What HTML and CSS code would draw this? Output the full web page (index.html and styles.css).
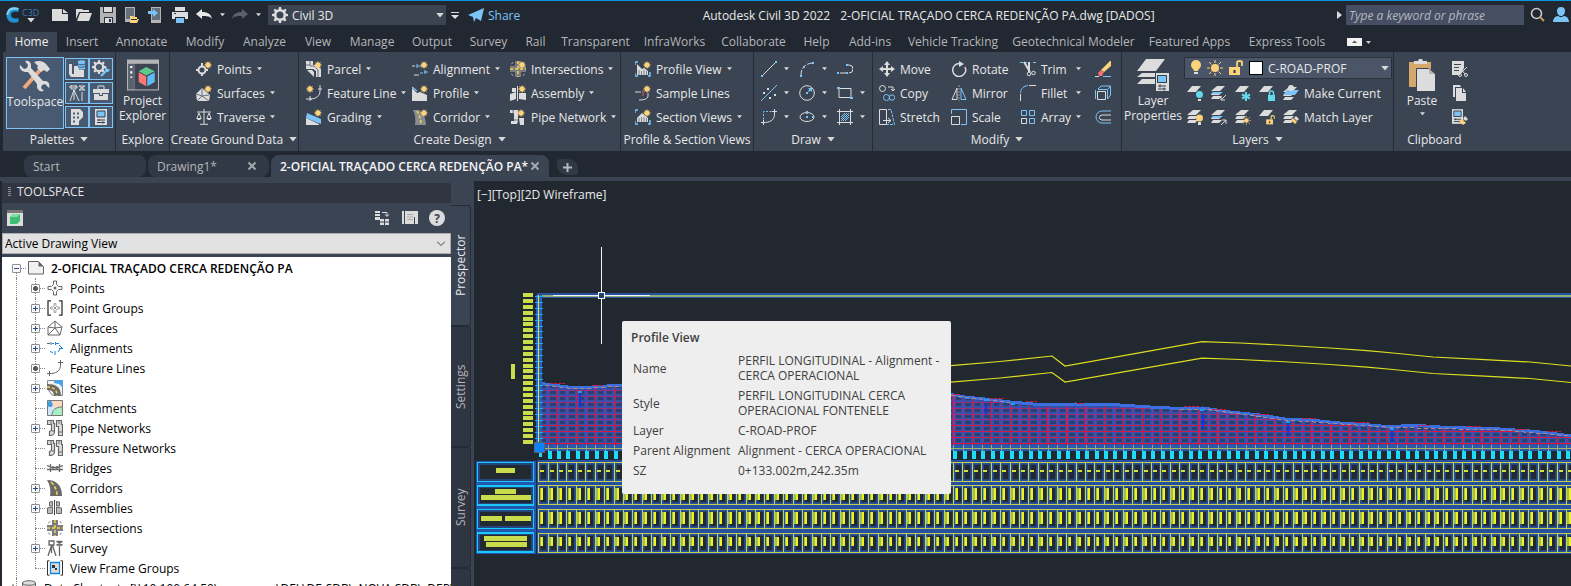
FILE: index.html
```html
<!DOCTYPE html>
<html lang="en">
<head>
<meta charset="utf-8">
<title>Autodesk Civil 3D 2022</title>
<link rel="stylesheet" href="styles.css">
</head>
<body>
<svg class="defs" aria-hidden="true">
  <symbol id="star" viewBox="0 0 8 8"><path class="y" d="M4 0l1 2 2-1-1 2 2 1-2 1 1 2-2-1-1 2-1-2-2 1 1-2-2-1 2-1-1-2 2 1z"/></symbol>
  <symbol id="caret" viewBox="0 0 6 4"><path fill="currentColor" d="M0 0h6L3 3.500z"/></symbol>
  <symbol id="close" viewBox="0 0 10 10"><path d="M1.500 1.500l7 7M8.500 1.500l-7 7" stroke="currentColor" stroke-width="2"/></symbol>
  <symbol id="new" viewBox="0 0 16 16"><path class="w" d="M0 2h10v5h6v7H0z"/><path class="w" d="M11 2l5 4h-5z"/></symbol>
  <symbol id="open" viewBox="0 0 16 16"><path class="w" d="M0 3V2h6l1 1h6v2H3L0 12z"/><path class="w" d="M4 6h12l-3 8H1z"/></symbol>
  <symbol id="save" viewBox="0 0 16 16"><path class="g" d="M0 0h16v16H0z"/><path class="d" d="M3 0h10v6H3zM4 10h9v6H4z"/><path class="w" d="M4 0h8v5H4zM5 11h7v5H5z"/><path class="d" d="M9 12h2v3H9z"/></symbol>
  <symbol id="webopen" viewBox="0 0 16 16"><path class="g" d="M1 0h10v15H1z"/><path fill="#66707c" d="M2 1h8v11H2z"/><path class="y" d="M6 9h3l1 1h3v2h2l-2 4H6z"/><path class="d" d="M7 12h6v1H7z"/></symbol>
  <symbol id="websave" viewBox="0 0 16 16"><path class="g" d="M3 0h10v16H3z"/><path fill="#66707c" d="M4 1h8v12H4z"/><path class="b" d="M0 4h5V2l5 4-5 4V7H0z"/></symbol>
  <symbol id="print" viewBox="0 0 16 16"><path class="w" d="M3 0h10v4H3zM0 5h16v7h-3v-2H3v2H0z"/><path class="b" d="M4 11h8v5H4z"/><path class="d" d="M2 6h2v1H2z"/></symbol>
  <symbol id="undo" viewBox="0 0 16 12"><path fill="currentColor" d="M0 5l6-5v3c6 0 9 2 10 7-2-3-5-3-10-3v3z"/></symbol>
  <symbol id="gear" viewBox="0 0 16 16"><path class="w" fill-rule="evenodd" d="M7 0h2l.5 2.300 1.700.7L13.300 1.800l1.200 1.300-1.200 2 .6 1.400 2.100.6v2l-2.200.5-.6 1.500 1.200 2-1.400 1.300-2-1.200-1.500.6L9 16H7l-.5-2.200-1.500-.6-2 1.200-1.400-1.300 1.200-2-.6-1.500L0 9V7l2.200-.5.6-1.400-1.200-2L2.900 1.800 5 3l1.500-.7zM8 4.500a3.500 3.500 0 100 7 3.500 3.500 0 000-7z"/></symbol>
  <symbol id="plane" viewBox="0 0 16 14"><path class="b" d="M0 7L16 0l-3 13-5-3-2 4-1-5zM5.500 8.500L12 3.500 7 9z"/></symbol>
  <symbol id="search" viewBox="0 0 16 16"><circle cx="6.500" cy="6.500" r="5" fill="none" stroke="#ccc" stroke-width="1.600"/><path d="M10 10l4 4" stroke="#c79a5c" stroke-width="2"/></symbol>
  <symbol id="user" viewBox="0 0 16 16"><path class="b" d="M8 0a4 4 0 014 4c0 3-2 5-4 5S4 7 4 4a4 4 0 014-4zM0 15c0-4 3-6 5-6 2 1.500 4 1.500 6 0 2 0 5 2 5 6z"/></symbol>

  <symbol id="tools" viewBox="0 0 32 32"><path d="M5 28L22 9" stroke="#f0a878" stroke-width="4"/><path class="w" d="M15 2c5-2 9-1 12 2l4 5-3 3-3-2-3 2-4-4 1-2z"/><path class="w" d="M1 5l4 4 3-1 1-3-3-4c3-1 6 1 6 4v3l12 13h3c3 1 4 4 3 7l-4-4-3 1-1 3 3 3c-4 1-7-1-7-5v-2L9 12H6c-4-1-6-4-5-7z"/></symbol>
  <symbol id="settings-pal" viewBox="0 0 18 18"><path class="w" d="M1 4h3v10h2V6h5v4h5v7H3l-2-3z"/><path class="b" d="M10 1c3-1 5-1 7 0v8c-2 1-5 1-7 0z"/><path d="M10 4c2 1 5 1 7 0M10 6.500c2 1 5 1 7 0" stroke="#35536f" fill="none"/></symbol>
  <symbol id="gearwrench" viewBox="0 0 18 18"><use href="#gear" width="14" height="14"/><path d="M9 16l6-6" stroke="#7cc4f8" stroke-width="2.400"/><path class="b" d="M13 8l2-1v2h2l1 1-2 2h-3z"/></symbol>
  <symbol id="tripod" viewBox="0 0 16 16"><path class="ws" d="M5 5L1 16M5 5v10M5 5l5 11M13 7v9M0 2h9M2 0h5v4H2zM10 1h6M10 5h6M10 1l6 4M16 1l-6 4"/></symbol>
  <symbol id="case" viewBox="0 0 16 16"><path class="ws" d="M5 4V1h6v3"/><path class="w" d="M0 4h16v4H0zM1 9h5v2h4V9h5v6H1z"/><path class="w" d="M7 8h2v2H7z"/></symbol>
  <symbol id="sheet" viewBox="0 0 16 16"><path class="w" d="M2 0h9l3 3v5l-4 4v4H2z"/><path stroke="#4a5f78" stroke-width="2" stroke-dasharray="2 2" d="M4 4.500h8M4 8.500h8M4 12.500h4"/></symbol>
  <symbol id="props" viewBox="0 0 12 16"><path class="w" d="M0 0h12v16H0z"/><path class="b" stroke="#333e4e" d="M2 2h8v6H2z"/><path d="M2 11h8M2 13.500h8M4 10v2M8 12.500v2" stroke="#333e4e"/></symbol>
  <symbol id="cube" viewBox="0 0 30 29"><path class="g" d="M0 0h30v29H0z"/><path fill="#3b4453" d="M7 4h22v24H7z"/><path fill="#5a626e" d="M1 4h6v24H1z"/><path stroke="#fff" stroke-width="2" stroke-dasharray="2 3" d="M4 6v11"/><path fill="#5dc98a" d="M18 7l8 4-8 4-7-4z"/><path fill="#f77" d="M11 12l7 4v9l-7-4z"/><path fill="#62baf5" d="M26 12l-7 4v9l7-4z"/></symbol>

  <symbol id="points" viewBox="0 0 16 16"><circle class="ws" cx="6" cy="9" r="3.500" stroke-width="2"/><path class="w" d="M5 2h2v4H5zM5 12h2v3H5zM0 8h3v2H0zM9 8h3v2H9z"/><use href="#star" x="8" width="8" height="8"/></symbol>
  <symbol id="surfaces" viewBox="0 0 16 16"><path class="w" d="M6 3l8 7-1 6H1L0 9z"/><path d="M0 9l6 2 7-1M6 3v8M1 16l5-5 7 5" stroke="#68707c" fill="none"/><use href="#star" x="8" width="8" height="8"/></symbol>
  <symbol id="traverse" viewBox="0 0 16 16"><path class="ws" d="M1 3h14M8 0v15M4 15.300h8M3 4L1 9M3 4l2 5M13 4l-2 5M13 4l2 5"/><path class="w" d="M0 9h6l-2 2H2zM10 9h6l-2 2h-2z"/></symbol>
  <symbol id="parcel" viewBox="0 0 16 16"><path class="w" d="M0 0h7v4h4l4 4v8h-5v-6L7 8H0z"/><path class="w" d="M1 9h5l2 2v5z"/><path d="M4 0v5h4l4 4v7M0 4h4" stroke="#68707c" fill="none"/><use href="#star" x="8" width="8" height="8"/></symbol>
  <symbol id="featureline" viewBox="0 0 16 16"><path class="ws" d="M12 4h4M14 0v6c0 5-4 8-10 8M0 14h6M4 11v5"/><use href="#star" width="8" height="8"/></symbol>
  <symbol id="grading" viewBox="0 0 16 16"><path class="w" d="M0 9l13 6v1H0z"/><path class="b" d="M1 4l14 6v5L0 9z"/><use href="#star" x="8" width="8" height="8"/></symbol>
  <symbol id="alignment" viewBox="0 0 16 16"><path class="ws" d="M0 5h3M2 14h5"/><path d="M5 5h5M5 3v4M12 11h4M13 9v4M8 12h3" stroke="#7cc4f8"/><use href="#star" x="8" width="8" height="8"/></symbol>
  <symbol id="profile" viewBox="0 0 16 16"><path class="w" d="M0 3l5 5 3-1 7 3v6H0z"/><path d="M0 2l5 4" stroke="#7cc4f8" stroke-width="1.500"/><use href="#star" x="8" width="8" height="8"/></symbol>
  <symbol id="corridor" viewBox="0 0 16 16"><path fill="#8a8d90" d="M1 1h6c4 3 7 8 7 15H3C4 10 3 5 1 1z"/><path d="M5 2c2 4 4 8 4 14" stroke="#fcd24b" stroke-width="1.500" stroke-dasharray="3 2" fill="none"/><use href="#star" x="8" width="8" height="8"/></symbol>
  <symbol id="cross" viewBox="0 0 16 16"><path fill="#7b7e80" d="M5 0h6v5h5v6h-5v5H5v-5H0V5h5z"/><path d="M8 0v16M0 8h16" stroke="#fcd24b" stroke-width="1.500" stroke-dasharray="3 2"/><path d="M1 3q2 0 2-2M15 3q-2 0-2-2M1 13q2 0 2 2M15 13q-2 0-2 2" stroke="#999" fill="none"/></symbol>
  <symbol id="intersections" viewBox="0 0 16 16"><use href="#cross" width="16" height="16"/><use href="#star" x="8" width="8" height="8"/></symbol>
  <symbol id="assembly" viewBox="0 0 16 16"><path class="w" d="M2 3h4v4H2zM0 9l6-2v7l-6 2zM9 8h7v7l-7-1z"/><path class="ws" d="M7.500 1v15"/><use href="#star" x="8" width="8" height="8"/></symbol>
  <symbol id="pipe" viewBox="0 0 16 16"><path class="w" d="M0 1h8v11l-1 3H1v-3h3V4H0zM9 9h5v7h-4z"/><path d="M3 1v4M4 11h4" stroke="#68707c"/><use href="#star" x="7" width="8" height="8"/></symbol>
  <symbol id="frame" viewBox="0 0 16 16"><path d="M0 4V1h3M0 12v3h3M13 15h2v-4" stroke="#7cc4f8" stroke-width="1.500" fill="none"/></symbol>
  <symbol id="profileview" viewBox="0 0 16 16"><use href="#frame" width="16" height="16"/><path class="w" d="M2 3l5 5 2-1 4 3v4H2z"/><path d="M4 9v5M6.500 10v4M9 9v5M11.500 10v4" stroke="#3b4453" stroke-width=".6"/><use href="#star" x="8" width="8" height="8"/></symbol>
  <symbol id="samplelines" viewBox="0 0 16 16"><path class="ws" d="M0 7h6M13 8v3c0 3-4 4-9 4"/><path d="M8 5v6" stroke="#e05a5a"/><use href="#star" x="8" width="8" height="8"/></symbol>
  <symbol id="sectionview" viewBox="0 0 16 16"><use href="#frame" width="16" height="16"/><path class="w" d="M2 13V9l5-5 6 5v4z"/><path d="M4 9v5M6.500 8v6M9 8v6M11.500 9v5" stroke="#3b4453" stroke-width=".6"/><use href="#star" x="8" width="8" height="8"/></symbol>

  <symbol id="line" viewBox="0 0 16 16"><path class="ws" d="M2 14L14 2"/><path class="b" d="M0 14h2v2H0zM14 0h2v2h-2z"/></symbol>
  <symbol id="arc" viewBox="0 0 16 16"><path class="ws" stroke-dasharray="5 1.500" d="M2 14C2 7 6 3 13 2"/><path class="b" d="M1 14h2v2H1zM4 5h2v2H4zM13 1h2v2h-2z"/></symbol>
  <symbol id="pline" viewBox="0 0 16 16"><path class="ws" d="M3 12h8M11 4h1a4 4 0 010 8"/><path class="b" d="M0 11h2v2H0zM9 3h2v2H9zM9 11h2v2H9z"/></symbol>
  <symbol id="cline" viewBox="0 0 16 16"><path d="M0 16L16 0" stroke="#7cc4f8"/><path class="w" d="M2 7h2v2H2zM6 3h2v2H6zM8 12h2v2H8zM13 9h2v2h-2z"/></symbol>
  <symbol id="circle" viewBox="0 0 16 16"><circle class="ws" cx="8" cy="8" r="7.300"/><path class="b" d="M7 7h2v2H7zM9 3h4v4l-1.500-1.500L10 7l-1-1 1.500-1.500z"/></symbol>
  <symbol id="rect" viewBox="0 0 16 16"><path class="ws" d="M2 3.500h12v9H2z"/><path class="b" d="M0 2h3v2H0zM13 12h3v2h-3z"/></symbol>
  <symbol id="fit" viewBox="0 0 16 16"><path d="M2.500 14V2.500H14" stroke="#7cc4f8" fill="none" stroke-dasharray="2 1.500"/><path class="ws" d="M11 2.500h5M13.500 0v5c0 5-3 8-9 8.500H0M2.500 11v5"/></symbol>
  <symbol id="ellipse" viewBox="0 0 16 16"><ellipse class="ws" cx="8" cy="8" rx="7" ry="4.500"/><path class="b" d="M7 7h2v2H7zM7 2h2v3H7zM13 7h2v2h-2z"/></symbol>
  <symbol id="hatch" viewBox="0 0 16 16"><path class="ws" d="M2.500 0v16M13.500 0v16M0 2.500h16M0 13.500h16"/><path d="M4 8l4-4M4 12l8-8M8 12l4-4M4 10l6-6M6 12l6-6" stroke="#7cc4f8"/></symbol>

  <symbol id="move" viewBox="0 0 16 16"><path class="w" d="M8 0l3 4H9v3h3V5l4 3-4 3V9H9v3h2l-3 4-3-4h2V9H4v2L0 8l4-3v2h3V4H5z"/></symbol>
  <symbol id="copy" viewBox="0 0 16 16"><circle class="ws" cx="3.500" cy="3.500" r="3"/><path class="ws" d="M9 2h5v3M12 4l2 2 2-2"/><circle class="bs" cx="7.500" cy="12.500" r="3"/><circle class="bs" cx="13" cy="12.500" r="2.700"/></symbol>
  <symbol id="stretch" viewBox="0 0 16 16"><path class="ws" d="M.5.500h7v15h-7zM4 11.500h8M9 9l3 2.500L9 14"/><path class="bs" d="M9 .5h3l3.500 15H8" stroke-dasharray="3 1"/></symbol>
  <symbol id="rotate" viewBox="0 0 16 16"><path class="ws" stroke-width="1.500" d="M9 2.500A6.500 6.500 0 1014 6"/><path class="w" d="M8 0l5 3-5 3z"/></symbol>
  <symbol id="mirror" viewBox="0 0 16 16"><path class="ws" d="M6 3v11.500H1z"/><path class="bs" d="M10 3v11.500h5z"/><path stroke="#999" d="M8 0v16" stroke-dasharray="2 1"/></symbol>
  <symbol id="scale" viewBox="0 0 16 16"><path class="bs" d="M.5 5V.5h15v15H10"/><path class="ws" d="M.5 7.500h8v8h-8z"/></symbol>
  <symbol id="trim" viewBox="0 0 16 16"><path d="M0 1.500h9M13 1.500h3" stroke="#7cc4f8" stroke-dasharray="3 1"/><path class="ws" stroke-width="2" d="M4 1l6 10M9 1v10"/><circle class="ws" cx="9" cy="13" r="1.800"/><circle class="ws" cx="13.500" cy="12" r="1.800"/></symbol>
  <symbol id="fillet" viewBox="0 0 16 16"><path class="bs" d="M.5 8C1 3 4 1 8 .5"/><path class="ws" d="M.5 9v7M9 .5h7"/></symbol>
  <symbol id="array" viewBox="0 0 16 16"><path class="bs" d="M1.500 1.500h5v5h-5zM9.500 1.500h5v5h-5zM9.500 9.500h5v5h-5z"/><path class="ws" d="M1.500 9.500h5v5h-5z"/></symbol>
  <symbol id="erase" viewBox="0 0 16 16"><path class="y" d="M6 9l9-9h1v5l-7 6z"/><path fill="#f27070" d="M3 12l3-3 3 2-2 4H4z"/><path class="ws" d="M0 15.500h4"/><path class="bs" d="M8 15.500h8"/></symbol>
  <symbol id="explode" viewBox="0 0 16 16"><path class="ws" d="M2.500 6.500h8v8h-8z"/><path class="bs" d="M.5 14V5M3 4l3-3h9.500v9l-3 4M12.500 14V4.500L15.500 1M3 4.500h9"/></symbol>
  <symbol id="offset" viewBox="0 0 16 16"><path class="bs" d="M16 2H7a6 6 0 000 12h9"/><path class="ws" d="M16 6H7a2.500 2.500 0 000 5h9"/></symbol>

  <symbol id="stack" viewBox="0 0 28 25"><path class="w" d="M9 0h19L19 12H0zM5 14h17l-2 4H0zM5 20h15l-2 5H0z"/></symbol>
  <symbol id="layerprops" viewBox="0 0 32 32"><use href="#stack" width="28" height="25"/><path class="w" stroke="#3b4453" d="M18.500 13.500h14v19h-14z"/><path class="b" stroke="#333e4e" d="M20.500 16.500h9v7h-9z"/><path d="M21 27h8M21 30h8M23 25.500v3M27 28.500v3" stroke="#333e4e"/></symbol>
  <symbol id="bulb" viewBox="0 0 12 16"><path class="y" d="M6 0a5 5 0 015 5c0 3-3 4-3 6H4c0-2-3-3-3-6a5 5 0 015-5z"/><path class="w" d="M4 12h4v2H4z"/></symbol>
  <symbol id="sun" viewBox="0 0 16 16"><circle class="y" cx="8" cy="8" r="4"/><path d="M8 0v3M8 13v3M0 8h3M13 8h3M2 2l2.500 2.500M11.500 11.500L14 14M14 2l-2.500 2.500M4.500 11.500L2 14" stroke="#fcd27b"/></symbol>
  <symbol id="unlock" viewBox="0 0 14 16"><path class="y" d="M0 7h11v8H0z"/><path d="M8 7V2.500C8 .5 13 .5 13 2.500V6" stroke="#fcd27b" stroke-width="1.800" fill="none"/><path class="d" d="M4.500 10h2v3h-2z"/></symbol>
  <symbol id="lay1" viewBox="0 0 16 16"><path class="w" d="M5 1h9l-5 6H0z"/></symbol>
  <symbol id="lay3" viewBox="0 0 16 16"><path class="w" d="M6 1h8l-5 5H0z"/><path class="w" d="M2 7h9l-3 3H0zM2 11h9l-3 3H0z"/></symbol>
  <symbol id="layoff" viewBox="0 0 16 16"><use href="#lay1"/><circle cx="12.500" cy="9.500" r="3.500" fill="#62d8e8"/><path class="w" d="M11 14h3v2h-3z"/></symbol>
  <symbol id="layiso" viewBox="0 0 16 16"><use href="#lay3"/><path class="b" d="M2 7h10l-3 2H0z"/><path class="ws" d="M15 10l-5 5M10 11v4h4"/></symbol>
  <symbol id="layfrz" viewBox="0 0 16 16"><use href="#lay1"/><path d="M11 7v9M7 9.500l8 4M15 9.500l-8 4" stroke="#62d8e8" stroke-width="2"/></symbol>
  <symbol id="laylck" viewBox="0 0 16 16"><use href="#lay1"/><path fill="#62d8e8" d="M9 10h7v6H9z"/><path d="M10.500 10V8a2 2 0 014 0v2" stroke="#62d8e8" stroke-width="1.500" fill="none"/></symbol>
  <symbol id="mkcur" viewBox="0 0 16 16"><use href="#lay3" y="1"/><path class="b" d="M4 5h12l-4 5H0z"/><circle class="w" cx="8" cy="3" r="3"/></symbol>
  <symbol id="layon" viewBox="0 0 16 16"><use href="#lay3"/><circle class="y" cx="12.500" cy="9" r="3.500"/><path class="w" d="M11 13h3v3h-3z"/></symbol>
  <symbol id="layuniso" viewBox="0 0 16 16"><use href="#lay3"/><path class="b" d="M2 7h10l-3 2H0z"/><path class="ws" d="M10 16l5-5M11 11h4v4"/></symbol>
  <symbol id="laythw" viewBox="0 0 16 16"><use href="#lay3"/><use href="#sun" x="7" y="7" width="9" height="9"/></symbol>
  <symbol id="layulk" viewBox="0 0 16 16"><use href="#lay1"/><use href="#unlock" x="7" y="6" width="9" height="10"/></symbol>
  <symbol id="laymch" viewBox="0 0 16 16"><use href="#lay3"/><path class="y" d="M8 11l4 4 2-2-4-4z"/><path class="w" d="M11 9l2-2 3 3-2 2z"/></symbol>
  <symbol id="paste" viewBox="0 0 26 32"><path fill="#d5a86c" d="M0 3h22v25H0z"/><path class="w" d="M5 5V2h4l1-2h3l1 2h4v3z"/><path class="w" stroke="#3b4453" d="M7.500 9.500h12l7 6v17h-19z"/><path class="g" d="M20 10v5h6z"/></symbol>
  <symbol id="cut" viewBox="0 0 16 16"><path class="w" d="M0 0h12v7l-4 7H0z"/><path d="M2 3.500h7M2 6.500h6M2 9.500h5" stroke="#3b4453"/><path class="ws" d="M7 6l6 7M15 6l-7 7"/><circle class="ws" cx="8" cy="14" r="1.500"/><circle class="ws" cx="14" cy="14" r="1.500"/></symbol>
  <symbol id="copyclip" viewBox="0 0 16 16"><path class="w" d="M1 0h7l1 2H3v10H1z"/><path class="w" d="M4 3h6v5h4v8H4zM11 3l3 4h-3z"/></symbol>
  <symbol id="matchprop" viewBox="0 0 16 16"><use href="#props" width="11" height="15"/><path class="y" d="M7 12l4 4 3-2-4-4z"/><path class="w" d="M11 10l2-3 3 3-2 2z"/></symbol>

  <symbol id="tdoc" viewBox="0 0 16 14"><path d="M.5.500h10l5 5v7.500H.5z" fill="#f2f2f2" stroke="#666"/><path d="M10.500.5v5h5z" fill="#666"/></symbol>
  <symbol id="tpoint" viewBox="0 0 16 16"><path class="ts" d="M6.500 1h3v3.500l2 2H15v3h-3.500l-2 2V15h-3v-3.500l-2-2H1v-3h3.500l2-2z"/><circle cx="8" cy="8" r="1.500" fill="#666"/></symbol>
  <symbol id="tpgroup" viewBox="0 0 16 16"><use href="#tpoint" x="3" y="3" width="10" height="10"/><path d="M4 .8H1v14.400h3M12 .8h3v14.400h-3" stroke="#333" stroke-width="1.300" fill="none"/></symbol>
  <symbol id="tsurf" viewBox="0 0 16 16"><path class="ts" d="M8 1l7 6-2 8H1V7zM8 1v7M1 7l7 1 7-1M1 15l7-7 5 7"/></symbol>
  <symbol id="talign" viewBox="0 0 16 16"><path d="M0 3.500h3M5 3.500h2" stroke="#666"/><path d="M4 2v3M8 3.500h4M8.500 2v3M12 5l3 3M12 8.500h4M13 9l-2 3M3 11.500l3 1M8 11v4" stroke="#1c84d6"/></symbol>
  <symbol id="tfeat" viewBox="0 0 16 16"><path class="ts" d="M11 2.500h5M13.500 0v5c0 5-3 8-9 8.500H0M2.500 11v5"/></symbol>
  <symbol id="tsite" viewBox="0 0 16 16"><path d="M.5.500h15v15h-5L5 15 .5 9z" fill="#f2f2f2" stroke="#888"/><path fill="#4aa5e8" d="M7 0h9v8l-4-4-5-1z"/><path fill="#6a6a6a" d="M0 4c9 0 14 3 14 12H7c0-4-2-6-7-6z"/><path d="M0 7c7 0 10 3 10 9" stroke="#fcd24b" stroke-width="1.500" stroke-dasharray="3 2" fill="none"/></symbol>
  <symbol id="tcatch" viewBox="0 0 16 16"><path d="M.5.500h15v15H.5z" fill="#fbd9bd" stroke="#777"/><path fill="#d3e7fb" d="M1 6h5l2 2-3 7H1z"/><path fill="#a9f0c4" d="M5 15c0-5 4-8 10-8v8z"/><path d="M5 15c0-5 4-8 10-8" stroke="#777" fill="none"/><path fill="#3f9be0" d="M3 0c4 4 3 7 0 7S-1 4 3 0z"/></symbol>
  <symbol id="tpipe" viewBox="0 0 16 16"><path d="M.5.500h6v3h1v8c0 3-1 4-5 4v-4l2-1v-6h-4zM9.500.500h5v4h1v11h-4v-9h-2z" fill="#ddd" stroke="#666" stroke-width="1.200"/><path d="M4 0v4M5 11h3M12 0v4M11 12h4" stroke="#666"/></symbol>
  <symbol id="tbridge" viewBox="0 0 16 16"><path class="ts" stroke-width="1.300" d="M0 5.500q8 4 16 0M0 9.500h16M3.500 4v8M12.500 4v8M6 6v4M10 6v4"/></symbol>
  <symbol id="tcorr" viewBox="0 0 16 16"><path fill="#6a6a6a" d="M0 0c10 0 15 6 15 16H3C4 10 3 5 0 0z"/><path d="M4 2c4 4 6 8 6 14" stroke="#fcd24b" stroke-width="1.600" stroke-dasharray="3.500 2" fill="none"/></symbol>
  <symbol id="tassm" viewBox="0 0 16 16"><path d="M2.500 6V2l3-.5V6zM.5 8l5-1v6.500H.5zM9.500 7l5 1v5.500h-5zM9.500 1.500l3 .5v4h-3z" fill="#bbb" stroke="#666"/><path stroke="#444" d="M7.500 0v15"/></symbol>
  <symbol id="tsurvey" viewBox="0 0 16 16"><path class="ts" stroke-width="1.300" d="M4.500 5.500L1 16M4.500 5.500V13M5.500 5.500L9 16M12.500 6v10M2 1h5v4H2zM9.500 1.500h6M9.500 5h6M9.500 1.500l6 3.500M15.500 1.500l-6 3.500"/></symbol>
  <symbol id="tvfg" viewBox="0 0 16 16"><path d="M2.500.8h-2v14.400h2M13.500.8h2v14.400h-2" stroke="#333" fill="none"/><path d="M3.500 2.500h9v11h-9z" fill="#ddd" stroke="#1c84d6" stroke-width="1.300"/><path fill="#333" d="M5 5h3v3H5zM8 8h2v2H8z"/></symbol>
  <symbol id="tdb" viewBox="0 0 14 16"><path d="M.5 3c0-3 13-3 13 0v12H.5z" fill="#ddd" stroke="#666"/><path d="M.5 3c0 3 13 3 13 0" fill="none" stroke="#666"/></symbol>
</svg>

<header class="titlebar">
  <button class="app" aria-label="Application menu"><svg class="logo" viewBox="0 0 13 16"><path d="M12.500 1C5-1.500 .5 2.500 .5 8s4.500 9.500 12 7v-4c-4 1.500-7.500 0-7.500-3s3.500-4.500 7.500-3z" fill="#1f8fd0"/><path d="M12.500 1C5-1.500 .5 2.500 .5 8h2C3 3.500 6 2 12.500 3z" fill="#7fd0f2"/></svg><span class="c3d">C3D<svg class="caret-lg"><use href="#caret"/></svg></span></button>
  <nav class="quick">
    <button aria-label="New"><svg class="i"><use href="#new"/></svg></button>
    <button aria-label="Open"><svg class="i"><use href="#open"/></svg></button>
    <button aria-label="Save"><svg class="i"><use href="#save"/></svg></button>
    <button aria-label="Open from web"><svg class="i"><use href="#webopen"/></svg></button>
    <button aria-label="Save to web"><svg class="i"><use href="#websave"/></svg></button>
    <button aria-label="Plot"><svg class="i"><use href="#print"/></svg></button>
    <button aria-label="Undo"><svg class="i"><use href="#undo"/></svg></button>
  </nav>
  <button class="drop" aria-label="Undo list"><svg class="car"><use href="#caret"/></svg></button>
  <button class="dim" aria-label="Redo"><svg class="i"><use href="#undo" transform="matrix(-1 0 0 1 16 0)"/></svg></button>
  <button class="drop" aria-label="Redo list"><svg class="car"><use href="#caret"/></svg></button>
  <label class="workspace"><svg class="i"><use href="#gear"/></svg><select aria-label="Workspace"><option>Civil 3D</option></select><svg class="caret-lg"><use href="#caret"/></svg></label>
  <button class="custom" aria-label="Customize"><svg viewBox="0 0 8 7"><path fill="#ddd" d="M0 0h8v1H0zM0 3h8L4 7z"/></svg></button>
  <button class="share"><svg class="i"><use href="#plane"/></svg>Share</button>
  <h1 class="doc"><span>Autodesk Civil 3D 2022</span><span>2-OFICIAL TRAÇADO CERCA REDENÇÃO PA.dwg [DADOS]</span></h1>
  <button class="expand" aria-label="Show search"><svg viewBox="0 0 5 8"><path fill="#ddd" d="M0 0l5 4-5 4z"/></svg></button>
  <input class="search" type="text" placeholder="Type a keyword or phrase" aria-label="Search">
  <button class="find" aria-label="Find"><svg class="i"><use href="#search"/></svg></button>
  <button class="account" aria-label="Account"><svg class="i"><use href="#user"/></svg></button>
</header>

<nav class="menu">
  <button class="on">Home</button><button>Insert</button><button>Annotate</button><button>Modify</button><button>Analyze</button><button>View</button><button>Manage</button><button>Output</button><button>Survey</button><button>Rail</button><button>Transparent</button><button>InfraWorks</button><button>Collaborate</button><button>Help</button><button>Add-ins</button><button>Vehicle Tracking</button><button>Geotechnical Modeler</button><button>Featured Apps</button><button>Express Tools</button>
  <button class="mini" aria-label="Minimize ribbon"><svg viewBox="0 0 24 8"><path fill="#f2f2f2" d="M0 0h15v8H0z"/><path fill="#555" d="M5 5h5L7.500 2.500z"/><path fill="#ccc" d="M19 3h5l-2.500 3z"/></svg></button>
</nav>

<main class="ribbon">
  <section class="panel palettes">
    <div class="body">
      <button class="big sel"><svg class="i32"><use href="#tools"/></svg>Toolspace</button>
      <div class="six">
        <button aria-label="Survey database"><svg class="i18"><use href="#settings-pal"/></svg></button>
        <button aria-label="Settings"><svg class="i18"><use href="#gearwrench"/></svg></button>
        <button aria-label="Survey"><svg class="i"><use href="#tripod"/></svg></button>
        <button aria-label="Toolbox"><svg class="i"><use href="#case"/></svg></button>
        <button aria-label="Panorama"><svg class="i"><use href="#sheet"/></svg></button>
        <button aria-label="Properties"><svg class="i"><use href="#props"/></svg></button>
      </div>
    </div>
    <h2>Palettes<svg class="caret-lg"><use href="#caret"/></svg></h2>
  </section>
  <section class="panel explore">
    <div class="body"><button class="big"><svg class="i32"><use href="#cube"/></svg>Project<br>Explorer</button></div>
    <h2>Explore</h2>
  </section>
  <section class="panel ground">
    <div class="body rows">
      <button><svg class="i"><use href="#points"/></svg>Points<svg class="car"><use href="#caret"/></svg></button>
      <button><svg class="i"><use href="#surfaces"/></svg>Surfaces<svg class="car"><use href="#caret"/></svg></button>
      <button><svg class="i"><use href="#traverse"/></svg>Traverse<svg class="car"><use href="#caret"/></svg></button>
    </div>
    <h2>Create Ground Data<svg class="caret-lg"><use href="#caret"/></svg></h2>
  </section>
  <section class="panel design">
    <div class="body rows">
      <button><svg class="i"><use href="#parcel"/></svg>Parcel<svg class="car"><use href="#caret"/></svg></button>
      <button><svg class="i"><use href="#alignment"/></svg>Alignment<svg class="car"><use href="#caret"/></svg></button>
      <button><svg class="i"><use href="#intersections"/></svg>Intersections<svg class="car"><use href="#caret"/></svg></button>
      <button><svg class="i"><use href="#featureline"/></svg>Feature Line<svg class="car"><use href="#caret"/></svg></button>
      <button><svg class="i"><use href="#profile"/></svg>Profile<svg class="car"><use href="#caret"/></svg></button>
      <button><svg class="i"><use href="#assembly"/></svg>Assembly<svg class="car"><use href="#caret"/></svg></button>
      <button><svg class="i"><use href="#grading"/></svg>Grading<svg class="car"><use href="#caret"/></svg></button>
      <button><svg class="i"><use href="#corridor"/></svg>Corridor<svg class="car"><use href="#caret"/></svg></button>
      <button><svg class="i"><use href="#pipe"/></svg>Pipe Network<svg class="car"><use href="#caret"/></svg></button>
    </div>
    <h2>Create Design<svg class="caret-lg"><use href="#caret"/></svg></h2>
  </section>
  <section class="panel views">
    <div class="body rows">
      <button><svg class="i"><use href="#profileview"/></svg>Profile View<svg class="car"><use href="#caret"/></svg></button>
      <button><svg class="i"><use href="#samplelines"/></svg>Sample Lines</button>
      <button><svg class="i"><use href="#sectionview"/></svg>Section Views<svg class="car"><use href="#caret"/></svg></button>
    </div>
    <h2>Profile &amp; Section Views</h2>
  </section>
  <section class="panel draw">
    <div class="body rows">
      <button aria-label="Line"><svg class="i"><use href="#line"/></svg><svg class="car"><use href="#caret"/></svg></button>
      <button aria-label="Arc"><svg class="i"><use href="#arc"/></svg><svg class="car"><use href="#caret"/></svg></button>
      <button aria-label="Polyline"><svg class="i"><use href="#pline"/></svg></button>
      <button aria-label="Construction line"><svg class="i"><use href="#cline"/></svg><svg class="car"><use href="#caret"/></svg></button>
      <button aria-label="Circle"><svg class="i"><use href="#circle"/></svg><svg class="car"><use href="#caret"/></svg></button>
      <button aria-label="Rectangle"><svg class="i"><use href="#rect"/></svg><svg class="car"><use href="#caret"/></svg></button>
      <button aria-label="Best fit"><svg class="i"><use href="#fit"/></svg><svg class="car"><use href="#caret"/></svg></button>
      <button aria-label="Ellipse"><svg class="i"><use href="#ellipse"/></svg><svg class="car"><use href="#caret"/></svg></button>
      <button aria-label="Hatch"><svg class="i"><use href="#hatch"/></svg><svg class="car"><use href="#caret"/></svg></button>
    </div>
    <h2>Draw<svg class="caret-lg"><use href="#caret"/></svg></h2>
  </section>
  <section class="panel modify">
    <div class="body rows">
      <button><svg class="i"><use href="#move"/></svg>Move</button>
      <button><svg class="i"><use href="#rotate"/></svg>Rotate</button>
      <button class="spread"><svg class="i"><use href="#trim"/></svg>Trim<svg class="car"><use href="#caret"/></svg></button>
      <button aria-label="Erase"><svg class="i"><use href="#erase"/></svg></button>
      <button><svg class="i"><use href="#copy"/></svg>Copy</button>
      <button><svg class="i"><use href="#mirror"/></svg>Mirror</button>
      <button class="spread"><svg class="i"><use href="#fillet"/></svg>Fillet<svg class="car"><use href="#caret"/></svg></button>
      <button aria-label="Explode"><svg class="i"><use href="#explode"/></svg></button>
      <button><svg class="i"><use href="#stretch"/></svg>Stretch</button>
      <button><svg class="i"><use href="#scale"/></svg>Scale</button>
      <button class="spread"><svg class="i"><use href="#array"/></svg>Array<svg class="car"><use href="#caret"/></svg></button>
      <button aria-label="Offset"><svg class="i"><use href="#offset"/></svg></button>
    </div>
    <h2>Modify<svg class="caret-lg"><use href="#caret"/></svg></h2>
  </section>
  <section class="panel layers">
    <div class="body">
      <button class="big"><svg class="i32"><use href="#layerprops"/></svg>Layer<br>Properties</button>
      <div class="layer-tools">
        <label class="layer-box"><svg class="bulb"><use href="#bulb"/></svg><svg class="i"><use href="#sun"/></svg><svg class="i"><use href="#unlock"/></svg><span class="swatch"></span><select aria-label="Current layer"><option>C-ROAD-PROF</option></select><svg class="caret-lg"><use href="#caret"/></svg></label>
        <div class="layer-grid rows">
          <button aria-label="Off"><svg class="i"><use href="#layoff"/></svg></button>
          <button aria-label="Isolate"><svg class="i"><use href="#layiso"/></svg></button>
          <button aria-label="Freeze"><svg class="i"><use href="#layfrz"/></svg></button>
          <button aria-label="Lock"><svg class="i"><use href="#laylck"/></svg></button>
          <button><svg class="i"><use href="#mkcur"/></svg>Make Current</button>
          <button aria-label="Turn all layers on"><svg class="i"><use href="#layon"/></svg></button>
          <button aria-label="Unisolate"><svg class="i"><use href="#layuniso"/></svg></button>
          <button aria-label="Thaw"><svg class="i"><use href="#laythw"/></svg></button>
          <button aria-label="Unlock"><svg class="i"><use href="#layulk"/></svg></button>
          <button><svg class="i"><use href="#laymch"/></svg>Match Layer</button>
        </div>
      </div>
    </div>
    <h2>Layers<svg class="caret-lg"><use href="#caret"/></svg></h2>
  </section>
  <section class="panel clip">
    <div class="body">
      <button class="big"><svg class="i32"><use href="#paste"/></svg>Paste<svg class="car"><use href="#caret"/></svg></button>
      <div class="rows">
        <button aria-label="Cut"><svg class="i"><use href="#cut"/></svg></button>
        <button aria-label="Copy clip"><svg class="i"><use href="#copyclip"/></svg></button>
        <button aria-label="Match properties"><svg class="i"><use href="#matchprop"/></svg></button>
      </div>
    </div>
    <h2>Clipboard</h2>
  </section>
</main>

<nav class="files">
  <div class="file start"><button class="name">Start</button></div>
  <div class="file second"><button class="name">Drawing1*</button><button class="x" aria-label="Close Drawing1"><svg><use href="#close"/></svg></button></div>
  <div class="file active"><button class="name">2-OFICIAL TRAÇADO CERCA REDENÇÃO PA*</button><button class="x" aria-label="Close drawing"><svg><use href="#close"/></svg></button></div>
  <button class="plus" aria-label="New tab"><svg viewBox="0 0 9 9"><path d="M4.500 0v9M0 4.500h9" stroke="#b5b8bc" stroke-width="2"/></svg></button>
</nav>

<div class="work">
  <aside class="toolspace">
    <h2 class="ts-title"><span class="grip"></span>TOOLSPACE</h2>
    <div class="ts-bar">
      <button aria-label="Item view"><svg class="i" viewBox="0 0 16 16"><path class="w" d="M0 0h16v16H0z"/><path fill="#777" d="M0 0h16v3H0z"/><path fill="#3fbf74" d="M3 7l3-3h7v7l-3 3H3z"/><path fill="#7fe0a4" d="M3 7l3-3h7l-3 3z"/></svg></button>
      <span class="grow"></span>
      <button aria-label="Toggle preview"><svg class="i" viewBox="0 0 16 16"><path class="w" d="M0 1h5v9H0zM5 9h4v6H5zM10 9h4v6h-4z"/><path stroke="#3b4453" d="M0 3.500h5M0 6.500h5M5 12h9"/><path class="ws" d="M7 2.500h5V6M10 4.500l2 2 2-2"/></svg></button>
      <button aria-label="Panorama display"><svg class="i" viewBox="0 0 16 16"><path class="w" d="M0 1h2v13H0zM3 1h13v13H3z"/><path stroke="#aaa" d="M5 4.500h6M5 7h6M5 9.500h6"/><path fill="#3b4453" d="M12 7h1v7h-1z"/></svg></button>
      <button class="help" aria-label="Help">?</button>
    </div>
    <label class="view"><select aria-label="View"><option>Active Drawing View</option></select><svg viewBox="0 0 8 5"><path d="M0 .5l4 4 4-4" fill="none" stroke="#444"/></svg></label>
    <ul class="tree">
      <li class="root"><i class="ex minus"></i><svg class="i"><use href="#tdoc"/></svg><b>2-OFICIAL TRAÇADO CERCA REDENÇÃO PA</b></li>
      <li><i class="ex dot"></i><svg class="i"><use href="#tpoint"/></svg>Points</li>
      <li><i class="ex more"></i><svg class="i"><use href="#tpgroup"/></svg>Point Groups</li>
      <li><i class="ex more"></i><svg class="i"><use href="#tsurf"/></svg>Surfaces</li>
      <li><i class="ex more"></i><svg class="i"><use href="#talign"/></svg>Alignments</li>
      <li><i class="ex dot"></i><svg class="i"><use href="#tfeat"/></svg>Feature Lines</li>
      <li><i class="ex more"></i><svg class="i"><use href="#tsite"/></svg>Sites</li>
      <li><i class="ex"></i><svg class="i"><use href="#tcatch"/></svg>Catchments</li>
      <li><i class="ex more"></i><svg class="i"><use href="#tpipe"/></svg>Pipe Networks</li>
      <li><i class="ex"></i><svg class="i"><use href="#tpipe"/></svg>Pressure Networks</li>
      <li><i class="ex"></i><svg class="i"><use href="#tbridge"/></svg>Bridges</li>
      <li><i class="ex more"></i><svg class="i"><use href="#tcorr"/></svg>Corridors</li>
      <li><i class="ex more"></i><svg class="i"><use href="#tassm"/></svg>Assemblies</li>
      <li><i class="ex"></i><svg class="i"><use href="#cross"/></svg>Intersections</li>
      <li><i class="ex more"></i><svg class="i"><use href="#tsurvey"/></svg>Survey</li>
      <li class="last"><i class="ex"></i><svg class="i"><use href="#tvfg"/></svg>View Frame Groups</li>
      <li class="root"><i class="ex minus"></i><svg class="i"><use href="#tdb"/></svg>Data Shortcuts [\\10.100.64.50\geonorma\DEL\DE-SDB\_NOVA SDB\_DEP\_01</li>
    </ul>
  </aside>
  <nav class="side">
    <button class="on">Prospector</button><button>Settings</button><button>Survey</button><button aria-label="Toolbox"></button>
  </nav>
  <section class="canvas">
    <svg class="drawing" aria-label="Profile view drawing">
      <defs>
        <clipPath id="ground"><path d="M538 383L552 385 575 388 600 386.500 622 385 760 384 951 394.500 965 397 985 399 1010 402 1045 405 1075 404 1120 405 1150 407 1180 408.500 1203 408 1230 412 1260 415 1285 419 1310 420 1340 423 1370 425 1392 427 1411 425 1440 427 1470 428 1500 429 1530 431 1550 433 1571 436 1900 446V446H538z"/></clipPath>
      </defs>
      <g transform="translate(-474 -181)">
        <path d="M527.500 293v151" stroke="#c9dc4c" stroke-width="10" stroke-dasharray="4 1.880"/>
        <path fill="#c9dc4c" d="M511 364h4v15h-4z"/>
        <path fill="#2452a0" d="M537 293h2400v5H537z"/><path fill="#8fae74" d="M539 295h2400v2H539z"/>
        <g clip-path="url(#ground)">
          <path fill="#29416f" d="M538 380h1400v66H538z"/>
          <path stroke="#3152ac" stroke-width="1400" stroke-dasharray="3 2.900" d="M1238 444.500V370"/>
          <path stroke="#3152ac" stroke-width="70" stroke-dasharray="4 5.430" d="M537 410H1900"/>
          <path stroke="#a02c78" stroke-width="1400" stroke-dasharray="1 4.900" d="M1238 444V370"/>
          <path stroke="#863898" stroke-width="70" stroke-dasharray="1 8.430" d="M538.600 410H1900"/>
          <path stroke="#e41434" stroke-width="70" stroke-dasharray="1 17.860" d="M557 410H1900"/>
          <path stroke="#d01c40" stroke-width="1400" stroke-dasharray="1 4.900" d="M1238 444V424"/>
        </g>
        <path fill="none" stroke="#3b6fe0" stroke-width="3" d="M538 383L552 385 575 388 600 386.500 622 385 760 384 951 394.500 965 397 985 399 1010 402 1045 405 1075 404 1120 405 1150 407 1180 408.500 1203 408 1230 412 1260 415 1285 419 1310 420 1340 423 1370 425 1392 427 1411 425 1440 427 1470 428 1500 429 1530 431 1550 433 1571 436"/>
        <path fill="none" stroke="#b08880" stroke-dasharray="4 3" d="M538 384L575 389 622 386M951 395.500L1010 402.500M1180 409L1203 409 1285 420 1392 427.500 1500 430 1571 436"/>
        <path stroke="#d01838" stroke-dasharray="3 1" d="M550 383.500h15M592 385.500h12M953 394.500h8M990 398.500h14M1026 401.500h12M1077 403.500h8M1184 406.500h16M1212 409.500h14M1255 414.500h14M1302 418.500h14M1354 422.500h16M1418 425.500h12M1466 426.500h16M1515 429.500h13M1547 431.500h14"/>
        <path fill="#1a9dff" d="M578 391h4v2h-4zM984 399h4v2h-4zM1011 403h4v2h-4zM1200 409h4v2h-4zM1286 421h4v2h-4zM1390 428h4v2h-4z"/>
        <path fill="#1632e0" d="M579 394h2v13h-2zM985 404h2v10h-2zM1202 414h2v14h-2zM1287 424h2v12h-2zM1391 431h2v11h-2z"/>
        <path fill="#e01430" d="M541 443h2400v1H541z"/>
        <path fill="#2c59ac" d="M538 445h2400v6H538z"/><path fill="#a6ba5c" d="M541 448h2400v1H541z"/>
        <path stroke="#8fa888" stroke-width="6" stroke-dasharray="1 8.430" d="M548 448h2400"/>
        <path stroke="#1adcff" stroke-width="8" stroke-dasharray="4 5.430" d="M547.600 455h2400"/><path fill="#1adcff" d="M539 452h3v5h-3z"/>
        <path fill="#2a62c4" d="M536 295h6v154h-6z"/><path stroke="#19a8ff" stroke-width="8" stroke-dasharray="1 4.900" d="M539 296v150"/>
        <path fill="#d8e040" d="M538 295h1v152h-1z"/>
        <path fill="#2850a2" d="M537 460h2400v94H537z"/>
        <path stroke="#26457a" stroke-width="16" stroke-dasharray="7 2.430" d="M540.100 472h2400M540.100 495h2400M540.100 519h2400M540.100 543h2400"/>
        <path stroke="#222931" stroke-width="14" stroke-dasharray="5 4.430" d="M541.100 472h2400M541.100 495h2400M541.100 519h2400M541.100 543h2400"/>
        <path stroke="#c4d448" stroke-width="20" stroke-dasharray="1 8.430" d="M538.100 472h2400M538.100 495h2400M538.100 519h2400M538.100 543h2400"/>
        <path stroke="#9ebc62" stroke-width="12" stroke-dasharray="2 7.430" d="M539.600 494h2400M539.600 518h2400"/>
        <path stroke="#f0f21c" stroke-width="12" stroke-dasharray="2 7.430" d="M541.100 494h2400M541.100 518h2400"/>
        <path stroke="#9ebc62" stroke-width="9" stroke-dasharray="2 7.430" d="M539.600 541.500h2400"/>
        <path stroke="#f0f21c" stroke-width="9" stroke-dasharray="2 7.430" d="M541.100 541.500h2400"/>
        <path stroke="#d8e03a" stroke-width="2" stroke-dasharray="4 5.430" d="M540.100 471h2400"/>
        <path stroke="#c0cf4e" d="M538 462.500h2400M538 481.500h2400M538 485.500h2400M538 504.500h2400M538 509.500h2400M538 528.500h2400M538 533.500h2400M538 552.500h2400"/>
        <path fill="#2256b0" d="M476 461h60v93H476z"/>
        <path fill="#222931" stroke="#19c8fa" stroke-width="1.500" d="M477.500 462.500h56v19h-56zM477.500 486h56v19h-56zM477.500 509.500h56v19h-56zM477.500 533h56v19h-56z"/>
        <path fill="none" stroke="#24467e" stroke-width="1.500" d="M479 464h53v16h-53zM479 487.500h53v16h-53zM479 511h53v16h-53zM479 534.500h53v16h-53z"/>
        <path fill="#c9dc4c" d="M496 468h19v5h-19zM495 489h21v5h-21zM481 495h50v5h-50zM481 516h21v5h-21zM505 516h26v5h-26zM484 536h43v5h-43zM486 542h41v5h-41z"/>
        <path fill="none" stroke="#dede20" stroke-width="1.200" shape-rendering="auto" d="M951 365.700L1000 361.500 1052 356 1065 366 1202 341.700 1240 343 1280 345 1330 348 1367 350.700 1393 353 1433 357 1480 359.300 1530 362 1571 366M951 382.200L1000 378 1052 372.500 1065 382 1202 358.200 1240 359.500 1280 361.500 1330 364.500 1367 367.200 1393 369.500 1433 373.500 1480 375.800 1530 378.500 1571 382.500"/>
        <path fill="#0a84ff" stroke="#566270" d="M534.500 442.500h10v10h-10z"/>
        <path stroke="#f2f2f2" d="M601.500 247v97M553 295.500h97"/><path fill="#26406e" stroke="#fff" d="M598.500 292.500h6v6h-6z"/>
      </g>
    </svg>
    <button class="vp">[−][Top][2D Wireframe]</button>
    <div class="tip" role="tooltip">
      <h3>Profile View</h3>
      <table>
        <tr><th>Name</th><td>PERFIL LONGITUDINAL - Alignment - CERCA OPERACIONAL</td></tr>
        <tr><th>Style</th><td>PERFIL LONGITUDINAL CERCA OPERACIONAL FONTENELE</td></tr>
        <tr><th>Layer</th><td>C-ROAD-PROF</td></tr>
        <tr><th>Parent Alignment</th><td>Alignment - CERCA OPERACIONAL</td></tr>
        <tr><th>SZ</th><td>0+133.002m,242.35m</td></tr>
      </table>
    </div>
  </section>
</div>
</body>
</html>
```
FILE: styles.css
```css
* { box-sizing: border-box; }
html, body { height: 100%; margin: 0; }
body {
  display: flex; flex-direction: column; overflow: hidden;
  background: #222831; color: #e8e8e8;
  border-top: 1px solid #0a96dc;
  font: 12px/15px "Open Sans", "Noto Sans", sans-serif;
}
button, select, input { font: inherit; color: inherit; background: none; border: 0; padding: 0; margin: 0; }
button { display: flex; align-items: center; white-space: nowrap; text-align: left; }
select { appearance: none; outline: 0; flex: 1; min-width: 0; }
h1, h2, h3 { margin: 0; font: inherit; }
svg { display: block; flex: none; }
.defs { position: absolute; width: 0; height: 0; }
.w { fill: #dcdcdc; } .g { fill: #b4b4b4; } .b { fill: #7cc4f8; } .y { fill: #fcd27b; } .d { fill: #2b3340; }
.ws { fill: none; stroke: #dcdcdc; } .bs { fill: none; stroke: #7cc4f8; } .ts { fill: none; stroke: #666; }
.i { width: 16px; height: 16px; }
.i18 { width: 18px; height: 18px; }
.i32 { width: 32px; height: 32px; }
.car { width: 5px; height: 4px; color: #d8d8d8; }
.caret-lg { width: 8px; height: 5px; color: #d8d8d8; }

/* title bar */
.titlebar { display: flex; align-items: center; flex: none; height: 28px; padding: 0 2px 0 6px; }
.app { width: 46px; gap: 3px; }
.logo { width: 13px; height: 16px; }
.c3d { display: flex; flex-direction: column; align-items: center; font-size: 9px; line-height: 10px; color: #3d78b8; }
.quick { display: flex; gap: 8px; }
.drop { width: 20px; justify-content: center; }
.dim { color: #5a616b; }
.workspace { display: flex; align-items: center; gap: 4px; width: 178px; height: 20px; padding: 0 2px 0 4px; background: #3c4452; }
.custom { width: 22px; padding-left: 5px; }
.custom svg { width: 8px; height: 7px; }
.share { gap: 4px; color: #7cc4f8; }
.doc { display: flex; justify-content: center; gap: 10px; flex: 1; white-space: nowrap; }
.expand { width: 9px; }
.expand svg { width: 5px; height: 8px; }
.search { width: 178px; height: 20px; padding: 0 3px; background: #454e62; font-style: italic; }
.search::placeholder { color: #b4b8c0; }
.find { padding: 0 7px 0 6px; }

/* menu */
.menu {
  display: grid; flex: none; height: 20px; margin-top: 3px; padding-left: 6px; color: #b4b6b9;
  grid-template-columns: 51px 50px 69px 58px 61px 46px 62px 58px 55px 39px 81px 77px 81px 45px 62px 104px 137px 95px 100px 44px;
}
.menu button { justify-content: center; padding-bottom: 1px; }
.menu .on { background: #3b4453; color: #f2f2f2; }
.mini svg { width: 24px; height: 8px; }

/* ribbon */
.ribbon { display: flex; flex: none; margin-left: 3px; background: #3b4453; }
.panel { display: flex; flex-direction: column; flex: none; padding-top: 5px; border-right: 1px solid #252c37; }
.panel .body { display: flex; height: 74px; }
.panel h2 { display: flex; justify-content: center; align-items: center; gap: 6px; height: 20px; padding-bottom: 3px; white-space: nowrap; }
.rows { display: grid; grid-auto-rows: 24px; }
.rows button { gap: 5px; }
.big { flex-direction: column; text-align: center; padding-top: 2px; }
.big .i32 { margin-bottom: 2px; }
.panel .body.rows { display: grid; }
.palettes { width: 113px; }
.palettes .body { gap: 1px; padding-left: 3px; }
.sel { width: 58px; height: 72px; background: #475a72; border: 1px solid #7cc4f8; }
.six { display: grid; grid-template-columns: 24px 24px; grid-auto-rows: 22px; row-gap: 2px; padding-top: 1px; }
.six button { justify-content: center; background: #475a72; border: 1px solid #7cc4f8; }
.explore { width: 54px; }
.explore .body { justify-content: center; }
.ground { width: 129px; }
.ground .body { padding-left: 26px; }
.design { width: 322px; }
.design .body { grid-template-columns: 106px 98px 1fr; padding-left: 7px; }
.views { width: 133px; }
.views .body { padding-left: 14px; }
.draw { width: 119px; }
.draw .body { grid-template-columns: 38px 38px 38px; padding-left: 7px; }
.draw button { gap: 7px; }
.modify { width: 249px; }
.modify .body { grid-template-columns: 72px 69px 75px 1fr; padding-left: 6px; }
.spread .car { margin-left: auto; margin-right: 14px; }
.layers { width: 272px; }
.layers .big { width: 62px; }
.layer-box { display: flex; align-items: center; gap: 5px; width: 208px; height: 22px; margin-bottom: 2px; padding: 0 2px 0 5px; background: #4a5568; border: 1px solid #2a313d; }
.bulb { width: 12px; height: 16px; }
.swatch { width: 14px; height: 14px; background: #fff; border: 1px solid #000; }
.layer-grid { grid-template-columns: 24px 24px 24px 24px 1fr; padding-left: 3px; }
.clip { width: 81px; border-right: 0; }
.clip .body { padding-left: 10px; gap: 12px; }
.clip .big { width: 36px; }
.clip .big .car { margin-top: 4px; }

/* drawing tabs */
.files { display: flex; flex: none; align-items: flex-start; gap: 2px; height: 30px; padding: 4px 0 0 24px; border-bottom: 4px solid #3b4453; color: #b4b6b9; }
.file { display: flex; align-items: center; justify-content: space-between; height: 22px; padding: 0 12px 0 9px; background: #323946; border-radius: 8px; }
.file.start { width: 122px; }
.file.second { width: 121px; }
.file.active { width: 278px; padding-right: 9px; background: #3b4453; color: #f6f6f6; font-weight: 600; border-radius: 8px 8px 0 0; }
.x svg { width: 10px; height: 10px; color: #a4a8ae; }
.plus { justify-content: center; width: 21px; height: 16px; margin: 4px 0 0 6px; background: #323946; border-radius: 3px 10px 3px 10px; }
.plus svg { width: 9px; height: 9px; }

/* workspace */
.work { display: flex; flex: 1; min-height: 0; margin-left: 2px; background: #3b4453; }
.toolspace { display: flex; flex-direction: column; flex: none; width: 449px; padding-top: 2px; }
.ts-title { display: flex; align-items: center; flex: none; gap: 6px; height: 20px; padding: 0 0 3px 6px; background: #2f3541; border-radius: 0 3px 0 0; }
.grip { width: 3px; height: 10px; background: repeating-linear-gradient(#8a8f98 0 1px, transparent 1px 2px); }
.ts-bar { display: flex; align-items: center; flex: none; gap: 11px; height: 30px; padding: 0 6px 0 5px; }
.grow { flex: 1; }
.help { justify-content: center; width: 16px; height: 16px; border-radius: 50%; background: #dcdcdc; color: #3b4453; font-weight: bold; }
.view { display: flex; align-items: center; flex: none; height: 21px; margin-bottom: 3px; padding: 0 5px 0 2px; background: #e1e1e1; color: #000; border: 1px solid #adadad; }
.view svg { width: 8px; height: 5px; }
.tree { flex: 1; min-height: 0; overflow: hidden; margin: 0; padding: 1px 0 0; list-style: none; background: #fff; color: #000; }
.tree b { font-weight: 600; }
.tree li { position: relative; display: flex; align-items: center; height: 20px; gap: 7px; padding-left: 29px; white-space: nowrap; }
.tree li.root { padding-left: 10px; }
.tree li::before { content: ""; position: absolute; left: 14px; top: 0; bottom: 0; border-left: 1px dotted #888; }
.tree li.root:first-child::before { top: 10px; }
.tree li:not(.root)::after { content: ""; position: absolute; left: 33px; top: 0; bottom: 0; border-left: 1px dotted #888; }
.tree li.last::after { bottom: 10px; }
.ex { position: relative; z-index: 1; width: 9px; height: 9px; }
.ex::after { content: ""; position: absolute; left: 9px; top: 4px; width: 5px; border-top: 1px dotted #888; }
.ex:not(.more):not(.dot):not(.minus)::after { left: 4px; width: 10px; }
.more, .minus, .dot { border: 1px solid #8f8f8f; border-radius: 1px; background: #fff; }
.more { background: linear-gradient(#2b4a8c, #2b4a8c) center/5px 1px no-repeat, linear-gradient(#2b4a8c, #2b4a8c) center/1px 5px no-repeat, #fafafa; }
.minus { background: linear-gradient(#2b4a8c, #2b4a8c) center/5px 1px no-repeat, #fafafa; }
.dot { background: radial-gradient(circle, #555 2px, #fff 3px); }
.more::after, .minus::after, .dot::after { left: 8px; top: 3px; }
.side { display: flex; flex-direction: column; flex: none; width: 20px; padding-top: 24px; }
.side button { flex: none; justify-content: center; width: 20px; height: 121px; writing-mode: vertical-rl; transform: rotate(180deg); background: #2f3541; border: 1px solid #252b36; border-width: 1px 0 1px 1px; border-radius: 3px 0 0 3px; color: #b4b6b9; }
.side .on { background: #3b4453; color: #e8e8e8; }
.canvas { position: relative; flex: 1; min-width: 0; margin-left: 3px; background: #222830; overflow: hidden; }
.drawing { width: 100%; height: 100%; shape-rendering: crispEdges; }
.vp { position: absolute; left: 3px; top: 6px; }
.tip { position: absolute; left: 148px; top: 140px; width: 329px; height: 173px; padding: 9px; background: #eee; color: #404040; border-radius: 2px; }
.tip h3 { font-weight: 600; margin-bottom: 6px; }
.tip table { border-spacing: 0; }
.tip th, .tip td { padding: 2px 0 3px 2px; text-align: left; font-weight: normal; }
.tip th { width: 105px; white-space: nowrap; }
```
